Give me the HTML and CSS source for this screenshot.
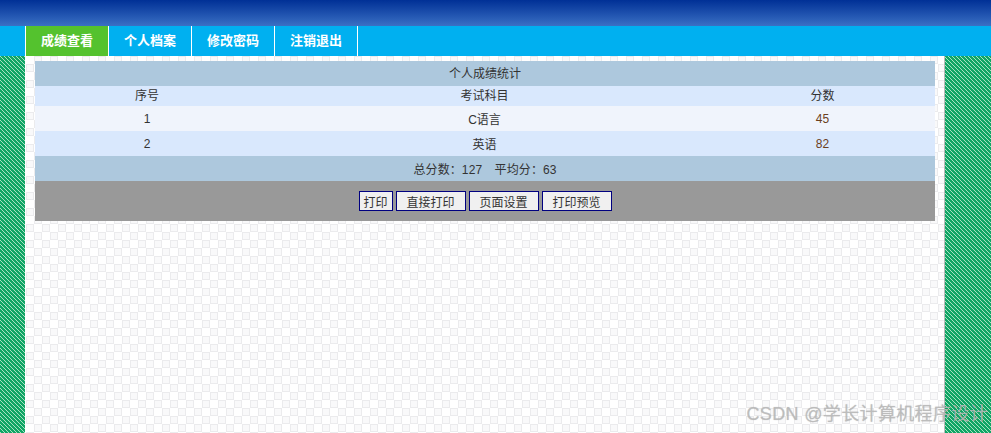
FILE: index.html
```html
<!DOCTYPE html>
<html lang="zh">
<head>
<meta charset="utf-8">
<title>个人成绩统计</title>
<link rel="stylesheet" href="styles.css">
</head>
<body>
<header class="top-band"></header>
<nav class="nav">
  <a class="nav-item active">成绩查看</a>
  <a class="nav-item">个人档案</a>
  <a class="nav-item">修改密码</a>
  <a class="nav-item">注销退出</a>
</nav>
<main class="content">
  <table class="scores">
    <colgroup><col class="c1"><col class="c2"><col class="c3"></colgroup>
    <tr class="title"><td colspan="3">个人成绩统计</td></tr>
    <tr class="head"><td>序号</td><td>考试科目</td><td>分数</td></tr>
    <tr class="odd"><td>1</td><td>C语言</td><td class="score">45</td></tr>
    <tr class="even"><td>2</td><td>英语</td><td class="score">82</td></tr>
    <tr class="total"><td colspan="3">总分数：127&nbsp;&nbsp;&nbsp;平均分：63</td></tr>
    <tr class="actions"><td colspan="3">
      <div class="btns">
        <button class="btn small">打印</button>
        <button class="btn">直接打印</button>
        <button class="btn">页面设置</button>
        <button class="btn">打印预览</button>
      </div>
    </td></tr>
  </table>
</main>
<div class="watermark">CSDN @学长计算机程序设计</div>
</body>
</html>
```
FILE: styles.css
```css
html, body { margin: 0; padding: 0; height: 100%; overflow: hidden; }
body {
  position: relative;
  display: flex;
  flex-direction: column;
  font-family: "Liberation Sans", "Noto Sans CJK SC", sans-serif;
  font-size: 12px;
  color: #333;
  background-color: #10a565;
  background-image: url("data:image/svg+xml,%3Csvg xmlns='http://www.w3.org/2000/svg' width='4' height='4' shape-rendering='crispEdges'%3E%3Cpath fill='%23a6e2c2' d='M0 0h1v1H0zM1 1h1v1H1zM2 2h1v1H2zM3 3h1v1H3z'/%3E%3C/svg%3E");
}
.top-band { height: 26px; background: linear-gradient(#003096, #3a70c4); }
.nav { height: 30px; background: #00b0f0; display: flex; padding-left: 25px; }
.nav-item {
  width: 82px;
  border-left: 1px solid #fff;
  color: #fff;
  font-weight: bold;
  font-size: 13px;
  text-align: center;
  line-height: 29px;
}
.nav-item:last-child { border-right: 1px solid #fff; }
.nav-item.active { background: #54c22e; }
.content {
  flex: 1;
  margin-left: 25px;
  width: 918px;
  border-left: 1px solid #fff;
  padding-top: 5px;
  border-right: 1px solid #bbb;
  background-color: #fff;
  background-image: url("data:image/svg+xml,%3Csvg xmlns='http://www.w3.org/2000/svg' width='16' height='16' shape-rendering='crispEdges'%3E%3Cg fill='%23f9f9fa' stroke='%23ebebed'%3E%3Crect x='8.5' y='0.5' width='7' height='7'/%3E%3Crect x='0.5' y='8.5' width='7' height='7'/%3E%3C/g%3E%3C/svg%3E");
  background-origin: padding-box;
}
.scores {
  width: 900px;
  margin-left: 9px;
  border-collapse: collapse;
  table-layout: fixed;
  text-align: center;
}
.scores td { padding: 0; }
.c1 { width: 224px; }
.c3 { width: 225px; }
.title { height: 25px; background: #adc8dd; }
.title td { padding-bottom: 2px; }
.head { height: 20px; background: #d9e8fd; }
.head td { padding-bottom: 3px; }
.odd { height: 25px; background: #f0f4fc; }
.even { height: 25px; background: #d9e8fd; }
.total { height: 25px; background: #adc8dd; }
.total td {
  font-family: "Liberation Sans", "Noto Sans CJK TC", sans-serif;
  word-spacing: 0.7px;
  letter-spacing: 0.1px;
}
.actions { height: 40px; background: #999; }
.score { color: #6b3f1d; }
.btns { display: flex; justify-content: center; gap: 3px; }
.btn {
  width: 70px;
  height: 20px;
  padding: 0;
  border: 1px solid #000080;
  background: #f0f0f0;
  color: #333;
  font: 12px "Liberation Sans", "Noto Sans CJK SC", sans-serif;
}
.btn.small { width: 34px; }
.watermark {
  position: absolute;
  right: 3px;
  bottom: 9px;
  font-size: 18px;
  letter-spacing: 0.35px;
  line-height: 20px;
  color: rgba(185,185,185,0.85);
  text-shadow: 0 0 1px rgba(110,110,110,0.35);
}
```
